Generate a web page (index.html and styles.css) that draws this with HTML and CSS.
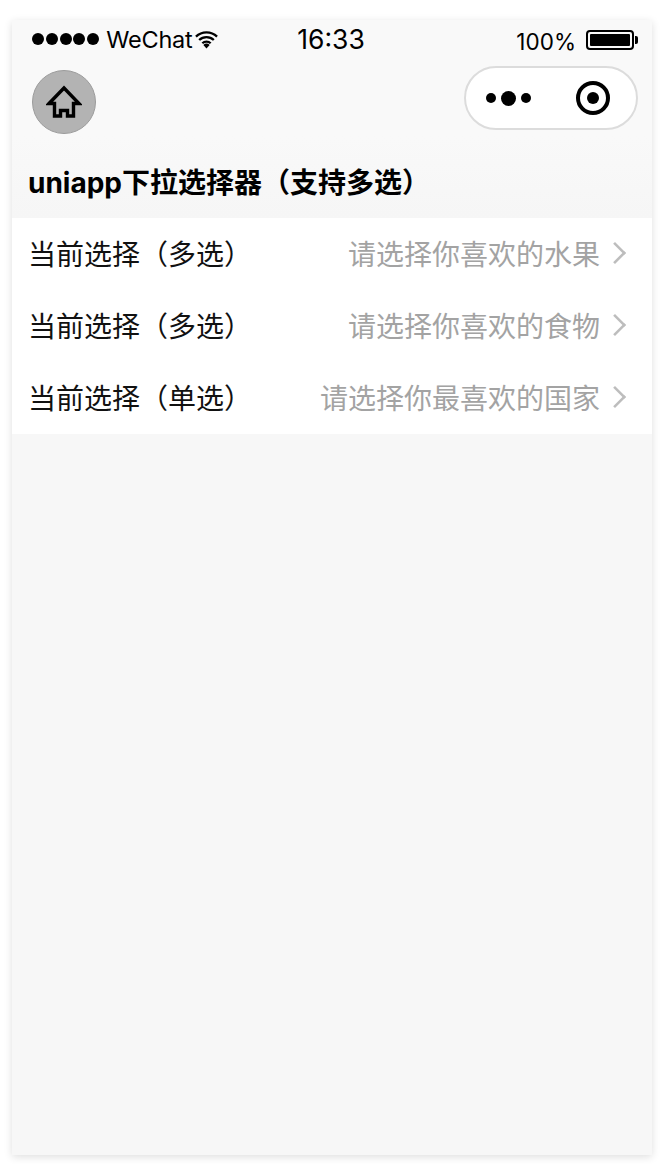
FILE: index.html
```html
<!DOCTYPE html>
<html lang="zh">
<head>
<meta charset="utf-8">
<title>uniapp下拉选择器</title>
<link rel="stylesheet" href="styles.css">
</head>
<body>
<div class="phone">
  <header class="status">
    <div class="status-left">
      <span class="dots"><i></i><i></i><i></i><i></i><i></i></span>
      <span class="carrier">WeChat</span>
      <svg class="wifi" width="23" height="19" viewBox="0 0 22 18"><path d="M.9 6.300a14.500 14.500 0 0 1 20.200 0M4 9.500a10 10 0 0 1 14 0M7 12.600a5.700 5.700 0 0 1 8 0" fill="none" stroke="#000" stroke-width="2.200"/><path d="M11 17.500l-3-3.300a4.200 4.200 0 0 1 6 0z" fill="#000"/></svg>
    </div>
    <div class="time">16:33</div>
    <div class="status-right">
      <span class="percent">100%</span>
      <span class="battery"><b></b></span><span class="nub"></span>
    </div>
  </header>
  <nav class="nav">
    <button class="home" aria-label="home">
      <svg width="36" height="34" viewBox="0 0 36 34"><path d="M3 18.500L18 3L33 18.500H27.500V31H21.500V25.500H14.500V31H8.500V18.500Z" fill="none" stroke="#000" stroke-width="3.400" stroke-linejoin="miter"/></svg>
    </button>
    <div class="capsule">
      <span class="more"><i></i><i class="big"></i><i></i></span>
      <span class="target"><i></i></span>
    </div>
  </nav>
  <h1 class="title">uniapp下拉选择器（支持多选）</h1>
  <ul class="list">
    <li class="row"><span class="label">当前选择（多选）</span><span class="hint">请选择你喜欢的水果</span><span class="chev"></span></li>
    <li class="row"><span class="label">当前选择（多选）</span><span class="hint">请选择你喜欢的食物</span><span class="chev"></span></li>
    <li class="row"><span class="label">当前选择（单选）</span><span class="hint">请选择你最喜欢的国家</span><span class="chev"></span></li>
  </ul>
</div>
</body>
</html>
```
FILE: styles.css
```css
* { box-sizing: border-box; }
html, body { margin: 0; height: 100%; }
body {
  background: #fff;
  padding: 20px 12px 9px;
  font-family: Inter, "Noto Sans CJK SC", sans-serif;
  color: #000;
  overflow: hidden;
}
.phone {
  height: 1135px;
  background: #f7f7f7;
  box-shadow: 0 2px 8px rgba(0, 0, 0, .13);
  display: flex;
  flex-direction: column;
}
.status {
  height: 38px;
  padding: 0 14px 0 20px;
  display: grid;
  grid-template-columns: 1fr auto 1fr;
  align-items: center;
  background: #f9f9f9;
}
.status-left { display: flex; align-items: center; }
.dots { display: flex; gap: 1.800px; }
.dots i { width: 12px; height: 12px; border-radius: 50%; background: #000; }
.carrier { font-size: 23.500px; margin-left: 7px; margin-right: 2px; letter-spacing: -.2px; }
.time { font-size: 26.500px; margin-right: 8px; }
.status-right { display: flex; align-items: center; justify-content: flex-end; }
.percent { font-size: 22.500px; margin-right: 10px; padding-top: 4px; }
.battery {
  width: 48px; height: 20px;
  border: 2px solid #000; border-radius: 4px;
  padding: 2px;
  display: flex;
  margin-top: 1px;
}
.battery b { flex: 1; background: #000; border-radius: 1px; }
.nub { width: 3px; height: 8px; background: #000; border-radius: 0 2px 2px 0; margin-left: 1px; margin-top: 1px; }
.nav {
  height: 78px;
  padding: 8px 14px 0 20px;
  display: flex;
  align-items: flex-start;
  justify-content: space-between;
  background: #f9f9f9;
}
.home {
  width: 64px; height: 64px;
  margin: 4px 0 0;
  padding: 0;
  border-radius: 50%;
  background: #b3b3b3;
  border: 1px solid #9c9c9c;
  display: flex;
  align-items: center;
  justify-content: center;
}
.capsule {
  width: 174px; height: 64px;
  border-radius: 32px;
  background: #fff;
  border: 2px solid #dcdcdc;
  display: flex;
  align-items: center;
  justify-content: space-between;
  padding: 0 26px 0 20px;
}
.more { display: flex; align-items: center; gap: 5px; }
.more i { width: 10px; height: 10px; border-radius: 50%; background: #000; }
.more i.big { width: 15px; height: 15px; }
.target {
  width: 34px; height: 34px;
  border: 4px solid #000; border-radius: 50%;
  display: flex; align-items: center; justify-content: center;
}
.target i { width: 12px; height: 12px; border-radius: 50%; background: #000; }
.title {
  margin: 0;
  height: 82px;
  padding: 8px 0 0 16px;
  display: flex;
  align-items: center;
  font-size: 28px;
  font-weight: 700;
  background: linear-gradient(#f9f9f9, #f6f6f6);
}
.list { margin: 0; padding: 0; list-style: none; background: #fff; }
.row {
  height: 72px;
  padding: 0 28px 2px 16px;
  display: flex;
  align-items: center;
  font-size: 28px;
}
.label { color: #111; }
.hint { margin-left: auto; color: #a3a3a3; }
.chev {
  width: 12px; height: 12px;
  margin: 0 3px 0 9px;
  border-top: 2px solid #bdbdbd;
  border-right: 2px solid #bdbdbd;
  transform: rotate(45deg) scale(1.3);
}
```
